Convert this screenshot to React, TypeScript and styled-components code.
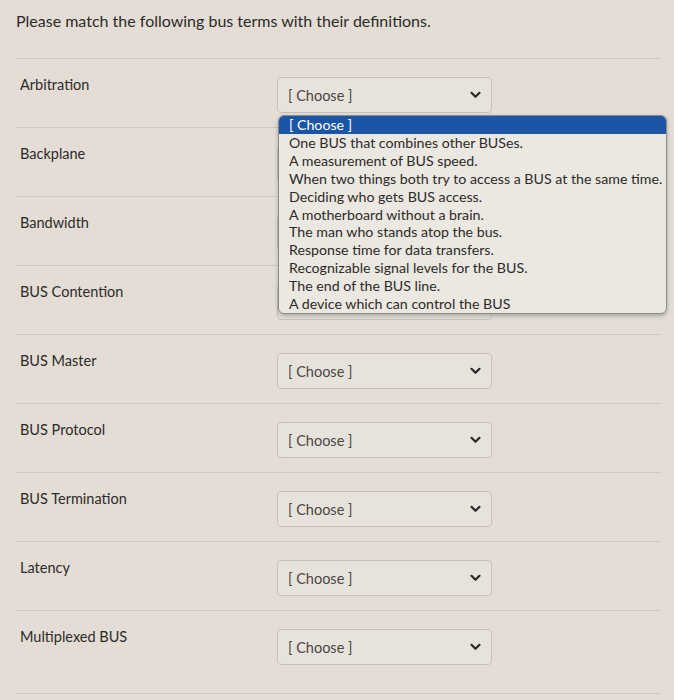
import React from "react";
import styled, { createGlobalStyle } from "styled-components";

const GlobalStyle = createGlobalStyle`
  html, body {
    margin: 0;
    padding: 0;
    background: #e3ddd5;
  }
  body {
    font-family: Lato, "Open Sans", sans-serif;
    color: #2d2b29;
  }
`;

const Page = styled.div`
  width: 674px;
  height: 700px;
  overflow: hidden;
  padding: 11px 13px 0 15px;
  box-sizing: border-box;
`;

const Title = styled.div`
  font-size: 16px;
  line-height: 19px;
  padding-left: 1px;
  margin-bottom: 28px;
`;

const List = styled.div`
  border-top: 1px solid #cec8bf;
`;

const Row = styled.div<{ $last?: boolean }>`
  display: grid;
  grid-template-columns: 257px 215px;
  height: ${(p) => (p.$last ? 82 : 68)}px;
  border-bottom: 1px solid #cec8bf;
  padding-left: 5px;
  box-sizing: content-box;
`;

const Label = styled.div`
  font-size: 14.5px;
  line-height: 17px;
  padding-top: 17px;
`;

const SelectWrap = styled.div`
  position: relative;
  padding-top: 18px;
`;

const Select = styled.div<{ $covered?: boolean }>`
  height: 36px;
  box-sizing: border-box;
  border: 1px solid #c6c0b8;
  border-radius: 4px;
  background: #e7e2db;
  display: flex;
  align-items: center;
  justify-content: space-between;
  padding: 0 10px 0 10px;
  font-size: 14.5px;
  color: #4a4744;
  & > * {
    visibility: ${(p) => (p.$covered ? "hidden" : "visible")};
  }
`;

const Chevron = () => (
  <svg width="11" height="8" viewBox="0 0 11 8">
    <polyline
      points="1.5,1.8 5.5,5.8 9.5,1.8"
      fill="none"
      stroke="#2a2826"
      strokeWidth="2.2"
      strokeLinecap="round"
      strokeLinejoin="round"
    />
  </svg>
);

const Menu = styled.div`
  position: absolute;
  top: 56px;
  left: 1px;
  width: 387px;
  z-index: 5;
  background: #ebe7e1;
  border: 1px solid #8f8b86;
  border-radius: 6px;
  box-shadow: 0 2px 4px rgba(0, 0, 0, 0.25);
  overflow: hidden;
`;

const Option = styled.div<{ $active?: boolean }>`
  font-size: 14.2px;
  line-height: 17.9px;
  padding-left: 10px;
  white-space: nowrap;
  background: ${(p) => (p.$active ? "#1b55a6" : "transparent")};
  color: ${(p) => (p.$active ? "#ffffff" : "#2d2b29")};
`;

const terms = [
  "Arbitration",
  "Backplane",
  "Bandwidth",
  "BUS Contention",
  "BUS Master",
  "BUS Protocol",
  "BUS Termination",
  "Latency",
  "Multiplexed BUS",
];

const options = [
  "[ Choose ]",
  "One BUS that combines other BUSes.",
  "A measurement of BUS speed.",
  "When two things both try to access a BUS at the same time.",
  "Deciding who gets BUS access.",
  "A motherboard without a brain.",
  "The man who stands atop the bus.",
  "Response time for data transfers.",
  "Recognizable signal levels for the BUS.",
  "The end of the BUS line.",
  "A device which can control the BUS",
];

export default function App() {
  return (
    <>
      <GlobalStyle />
      <Page>
        <Title>Please match the following bus terms with their definitions.</Title>
        <List>
          {terms.map((t, i) => (
            <Row key={t} $last={i === terms.length - 1}>
              <Label>{t}</Label>
              <SelectWrap>
                <Select $covered={i > 0 && i < 4}>
                  <span>[ Choose ]</span>
                  <Chevron />
                </Select>
                {i === 0 && (
                  <Menu>
                    {options.map((o, j) => (
                      <Option key={o} $active={j === 0}>
                        {o}
                      </Option>
                    ))}
                  </Menu>
                )}
              </SelectWrap>
            </Row>
          ))}
        </List>
      </Page>
    </>
  );
}
